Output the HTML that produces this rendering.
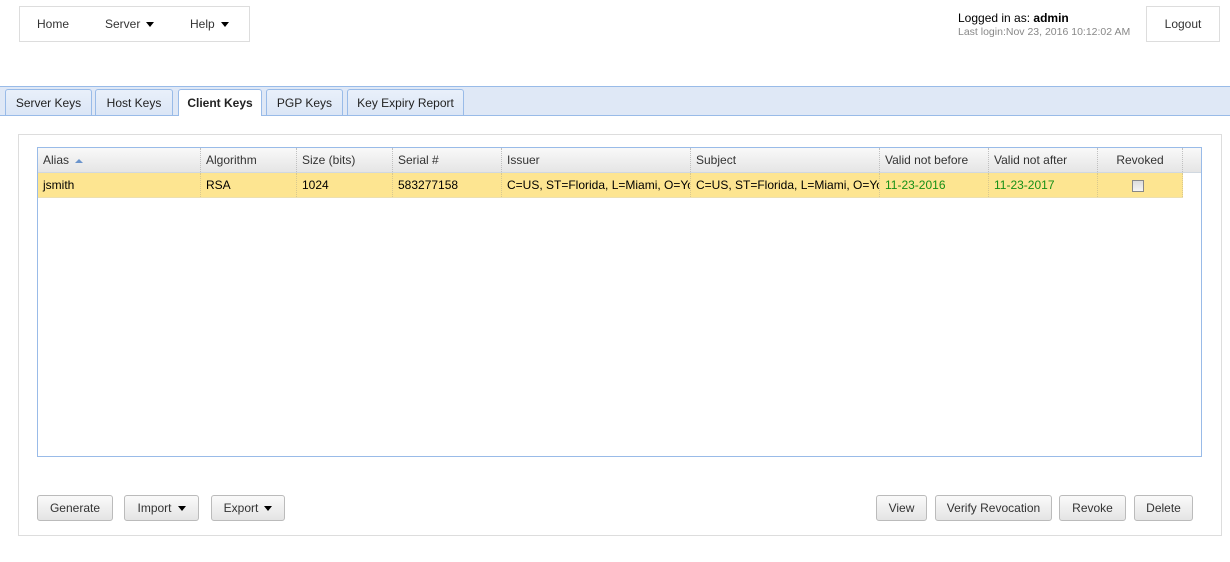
<!DOCTYPE html>
<html><head><meta charset="utf-8"><style>
*{box-sizing:border-box;margin:0;padding:0}
body{width:1230px;height:562px;background:#fff;font-family:"Liberation Sans",Arial,sans-serif;font-size:12px;color:#333;position:relative;overflow:hidden}
.a{position:absolute}
.box{border:1px solid #ddd;background:#fff}
.caret{display:inline-block;width:0;height:0;border-left:4px solid transparent;border-right:4px solid transparent;border-top:5px solid #000;vertical-align:middle;margin-left:6px}
.tabbar{left:0;top:86px;width:1230px;height:30px;background:#dfe8f6;border-top:1px solid #99bbe8;border-bottom:1px solid #99bbe8}
.tab{top:89px;height:26px;border:1px solid #99bbe8;border-bottom:none;border-radius:3px 3px 0 0;background:linear-gradient(#e9f0fa,#dbe6f6);font-size:12px;text-align:center;line-height:26px;color:#222}
.tab.on{background:#fff;font-weight:bold;height:27px;color:#222}
.grid{left:37px;top:147px;width:1165px;height:310px;border:1px solid #99bbe8;background:#fff}
.hd,.row{position:absolute;left:0;height:25px;display:flex}
.hd{top:0;width:1163px;background:linear-gradient(#f9f9f9,#e5e5e5);border-bottom:1px solid #d0d8e0}
.row{top:25px;width:1145px;background:#fde591;border-bottom:1px solid #ede0b0}
.c{height:100%;line-height:24px;padding-left:5px;border-right:1px dotted #c0c0c0;white-space:nowrap;overflow:hidden;flex:none}
.row .c{color:#000;border-right:1px dotted #d8c890}
.g{color:#179017!important}
.btn{top:495px;height:26px;border:1px solid #bbb;border-radius:3px;background:linear-gradient(#fafafa,#e4e4e4);text-align:center;line-height:24px;color:#333;font-size:12px}
</style></head><body>
<div class="a box" style="left:19px;top:6px;width:231px;height:36px"></div>
<div class="a" style="left:37px;top:17px">Home</div>
<div class="a" style="left:105px;top:17px">Server<span class="caret"></span></div>
<div class="a" style="left:190px;top:17px">Help<span class="caret"></span></div>
<div class="a" style="left:958px;top:11px;color:#000">Logged in as: <b>admin</b></div>
<div class="a" style="left:958px;top:26px;font-size:10.5px;color:#888">Last login:Nov 23, 2016 10:12:02 AM</div>
<div class="a box" style="left:1146px;top:6px;width:74px;height:36px;text-align:center;line-height:34px">Logout</div>

<div class="a tabbar"></div>
<div class="a tab" style="left:5px;width:87px">Server Keys</div>
<div class="a tab" style="left:95px;width:78px">Host Keys</div>
<div class="a tab on" style="left:178px;width:84px">Client Keys</div>
<div class="a tab" style="left:266px;width:77px">PGP Keys</div>
<div class="a tab" style="left:347px;width:117px">Key Expiry Report</div>

<div class="a box" style="left:18px;top:134px;width:1204px;height:402px"></div>
<div class="a grid">
<div class="hd">
<div class="c" style="width:163px">Alias <svg width="10" height="6" style="margin-left:2px"><path d="M1 5L5 1L9 5Z" fill="#6b94cc"/></svg></div>
<div class="c" style="width:96px">Algorithm</div>
<div class="c" style="width:96px">Size (bits)</div>
<div class="c" style="width:109px">Serial #</div>
<div class="c" style="width:189px">Issuer</div>
<div class="c" style="width:189px">Subject</div>
<div class="c" style="width:109px">Valid not before</div>
<div class="c" style="width:109px">Valid not after</div>
<div class="c" style="width:85px;text-align:center;padding:0">Revoked</div>
</div>
<div class="row">
<div class="c" style="width:163px">jsmith</div>
<div class="c" style="width:96px">RSA</div>
<div class="c" style="width:96px">1024</div>
<div class="c" style="width:109px">583277158</div>
<div class="c" style="width:189px">C=US, ST=Florida, L=Miami, O=Yo</div>
<div class="c" style="width:189px">C=US, ST=Florida, L=Miami, O=Yo</div>
<div class="c g" style="width:109px">11-23-2016</div>
<div class="c g" style="width:109px">11-23-2017</div>
<div class="c" style="width:85px;padding:0;position:relative"><div style="position:absolute;left:34px;top:7px;width:12px;height:12px;border:1px solid #888;background:linear-gradient(#ddd,#f5f5f5)"></div></div>
</div>
</div>

<div class="a btn" style="left:37px;width:76px">Generate</div>
<div class="a btn" style="left:124px;width:75px">Import<span class="caret"></span></div>
<div class="a btn" style="left:211px;width:74px">Export<span class="caret"></span></div>
<div class="a btn" style="left:876px;width:51px">View</div>
<div class="a btn" style="left:935px;width:117px">Verify Revocation</div>
<div class="a btn" style="left:1059px;width:67px">Revoke</div>
<div class="a btn" style="left:1134px;width:59px">Delete</div>
</body></html>
